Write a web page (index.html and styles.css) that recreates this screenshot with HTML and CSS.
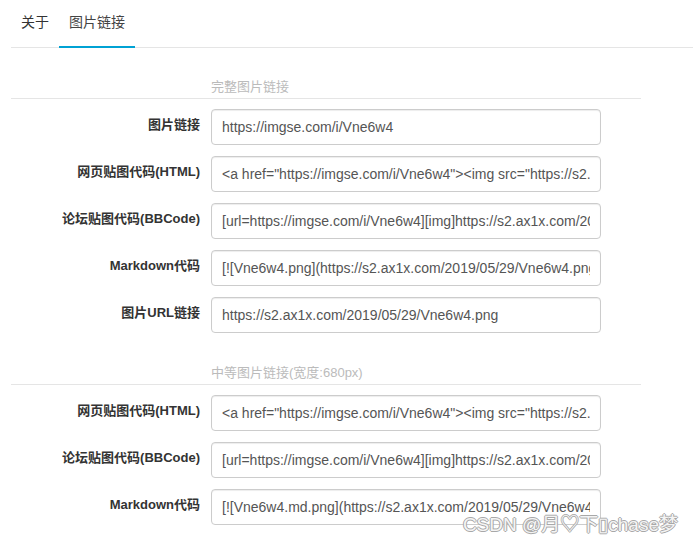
FILE: index.html
```html
<!DOCTYPE html>
<html lang="zh-CN">
<head>
<meta charset="utf-8">
<title>图片链接</title>
<link rel="stylesheet" href="styles.css">
</head>
<body>
<div class="page">
  <nav class="tabs">
    <a class="tab">关于</a>
    <a class="tab active">图片链接</a>
  </nav>

  <section class="group first">
    <div class="group-title">完整图片链接</div>
    <div class="row"><label class="label">图片链接</label><input class="field" readonly value="https://imgse.com/i/Vne6w4"></div>
    <div class="row"><label class="label">网页贴图代码(HTML)</label><input class="field" readonly value='&lt;a href="https://imgse.com/i/Vne6w4"&gt;&lt;img src="https://s2.ax1x.com/2019/05/29/Vne6w4.png" alt="Vne6w4.png" border="0" /&gt;&lt;/a&gt;'></div>
    <div class="row"><label class="label">论坛贴图代码(BBCode)</label><input class="field" readonly value="[url=https://imgse.com/i/Vne6w4][img]https://s2.ax1x.com/2019/05/29/Vne6w4.png[/img][/url]"></div>
    <div class="row"><label class="label">Markdown代码</label><input class="field" readonly value="[![Vne6w4.png](https://s2.ax1x.com/2019/05/29/Vne6w4.png)](https://imgse.com/i/Vne6w4)"></div>
    <div class="row"><label class="label">图片URL链接</label><input class="field" readonly value="https://s2.ax1x.com/2019/05/29/Vne6w4.png"></div>
  </section>

  <section class="group second">
    <div class="group-title">中等图片链接(宽度:680px)</div>
    <div class="row"><label class="label">网页贴图代码(HTML)</label><input class="field" readonly value='&lt;a href="https://imgse.com/i/Vne6w4"&gt;&lt;img src="https://s2.ax1x.com/2019/05/29/Vne6w4.md.png" alt="Vne6w4.md.png" border="0" /&gt;&lt;/a&gt;'></div>
    <div class="row"><label class="label">论坛贴图代码(BBCode)</label><input class="field" readonly value="[url=https://imgse.com/i/Vne6w4][img]https://s2.ax1x.com/2019/05/29/Vne6w4.md.png[/img][/url]"></div>
    <div class="row"><label class="label">Markdown代码</label><input class="field" readonly value="[![Vne6w4.md.png](https://s2.ax1x.com/2019/05/29/Vne6w4.md.png)](https://imgse.com/i/Vne6w4)"></div>
  </section>

  <div class="watermark">CSDN @月♡下▯chase梦</div>
</div>
</body>
</html>
```

FILE: styles.css
```css
* {
  box-sizing: border-box;
}

html, body {
  margin: 0;
  padding: 0;
  background: #ffffff;
}

body {
  font-family: "Liberation Sans", "Noto Sans CJK SC", Arial, sans-serif;
  color: #333;
  overflow: hidden;
}

.page {
  position: relative;
  width: 693px;
  height: 545px;
  overflow: hidden;
}

.tabs {
  display: flex;
  margin-left: 11px;
  border-bottom: 1px solid #e5e5e5;
}

.tab {
  display: block;
  height: 48px;
  margin-bottom: -1px;
  padding: 12px 10px 14px;
  font-size: 14px;
  line-height: 20px;
  color: #333;
  border-bottom: 2px solid transparent;
}

.tab.active {
  color: #444;
  border-bottom-color: #00a2d4;
}

.group {
  width: 630px;
  margin-left: 11px;
}

.group.first {
  margin-top: 30px;
}

.group.second {
  margin-top: 31px;
}

.group-title {
  padding: 0 0 2px 200px;
  font-size: 13px;
  line-height: 18px;
  color: #bbbbbb;
  border-bottom: 1px solid #e5e5e5;
  margin-bottom: 10px;
}

.row {
  display: flex;
  align-items: flex-start;
  margin-bottom: 11px;
}

.label {
  width: 200px;
  flex: none;
  padding: 6px 11px 0 0;
  text-align: right;
  font-size: 13px;
  line-height: 20px;
  font-weight: bold;
  color: #333;
}

.field {
  display: block;
  width: 390px;
  height: 36px;
  padding: 0 10px;
  margin: 0;
  font-family: "Liberation Sans", "Noto Sans CJK SC", Arial, sans-serif;
  font-size: 14px;
  color: #555;
  background: #fff;
  border: 1px solid #cccccc;
  border-radius: 4px;
  box-shadow: inset 0 1px 1px rgba(0, 0, 0, 0.075);
  outline: none;
}

.watermark {
  position: absolute;
  right: 15px;
  top: 513px;
  font-size: 19px;
  line-height: 24px;
  white-space: nowrap;
  color: rgba(255, 255, 255, 0.9);
  text-shadow: 1px 0 0 #a8a8a8, -1px 0 0 #a8a8a8, 0 1px 0 #a8a8a8, 0 -1px 0 #a8a8a8;
}
```
